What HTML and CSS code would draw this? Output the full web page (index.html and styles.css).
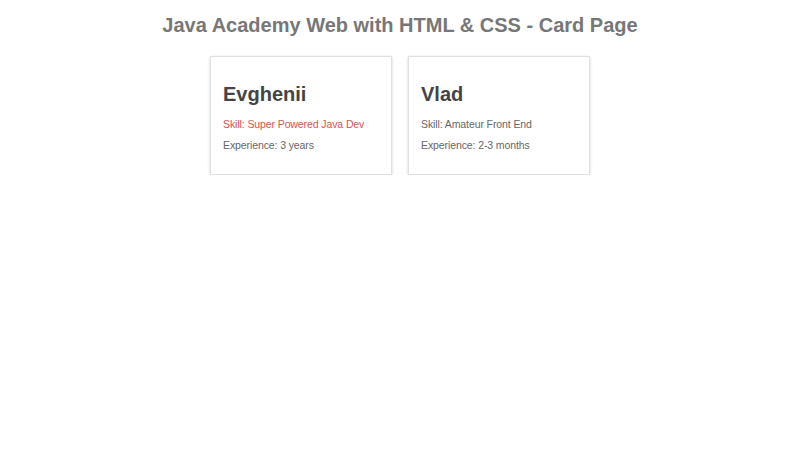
FILE: index.html
```html
<!DOCTYPE html>
<html>
<head>
<meta charset="utf-8">
<link rel="stylesheet" href="styles.css">
</head>
<body>
<h1 class="page-title">Java Academy Web with HTML &amp; CSS - Card Page</h1>
<div class="cards">
  <div class="card">
    <h2 class="card-name">Evghenii</h2>
    <p class="card-line skill-red">Skill: Super Powered Java Dev</p>
    <p class="card-line">Experience: 3 years</p>
  </div>
  <div class="card">
    <h2 class="card-name">Vlad</h2>
    <p class="card-line">Skill: Amateur Front End</p>
    <p class="card-line">Experience: 2-3 months</p>
  </div>
</div>
</body>
</html>
```
FILE: styles.css
```css
body {
  margin: 0;
  background: #fff;
  font-family: "Liberation Sans", Arial, sans-serif;
}
.page-title {
  margin: 0;
  padding-top: 13px;
  text-align: center;
  font-size: 20px;
  line-height: 24px;
  font-weight: bold;
  color: #777;
}
.cards {
  display: flex;
  justify-content: center;
  gap: 16px;
  margin-top: 19px;
}
.card {
  width: 182px;
  height: 119px;
  box-sizing: border-box;
  border: 1px solid #e0e0e0;
  box-shadow: 0 1px 3px rgba(0,0,0,0.16);
  padding: 25px 12px 0 12px;
}
.card-name {
  margin: 0 0 11px 0;
  font-size: 20px;
  line-height: 24px;
  color: #444;
}
.card-line {
  margin: 0 0 7px 0;
  font-size: 10.5px;
  letter-spacing: -0.1px;
  line-height: 14px;
  color: #666;
}
.skill-red {
  color: #d9534f;
}
```
